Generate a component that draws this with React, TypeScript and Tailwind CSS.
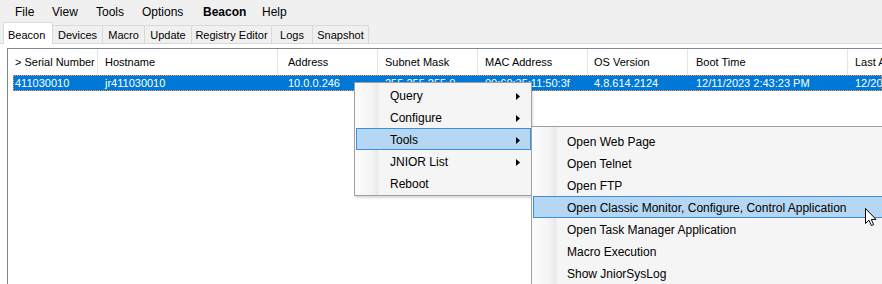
import React from "react";

const menuBar = [
  { label: "File", w: "w-[37px]" },
  { label: "View", w: "w-[44px]" },
  { label: "Tools", w: "w-[46px]" },
  { label: "Options", w: "w-[61px]" },
  { label: "Beacon", w: "w-[59px]", bold: true },
  { label: "Help", w: "w-[40px]" },
];

const tabs = [
  { label: "Devices", w: "w-[50px]" },
  { label: "Macro", w: "w-[42px]" },
  { label: "Update", w: "w-[47px]" },
  { label: "Registry Editor", w: "w-[80px]" },
  { label: "Logs", w: "w-[41px]" },
  { label: "Snapshot", w: "w-[56px]" },
];

const headers = [
  { label: "> Serial Number", cls: "w-[90px] pl-[7px]" },
  { label: "Hostname", cls: "w-[180px] pl-[7px]" },
  { label: "Address", cls: "w-[100px] pl-[10px]" },
  { label: "Subnet Mask", cls: "w-[100px] pl-[7px]" },
  { label: "MAC Address", cls: "w-[110px] pl-[7px]" },
  { label: "OS Version", cls: "w-[100px] pl-[6px]" },
  { label: "Boot Time", cls: "w-[160px] pl-[8px]" },
  { label: "Last Activity", cls: "w-[200px] pl-[7px]" },
];

const row = [
  { text: "411030010", cls: "w-[85px] pl-[2px]" },
  { text: "jr411030010", cls: "w-[180px] pl-[7px]" },
  { text: "10.0.0.246", cls: "w-[100px] pl-[10px]" },
  { text: "255.255.255.0", cls: "w-[100px] pl-[7px]" },
  { text: "00:60:35:11:50:3f", cls: "w-[110px] pl-[7px]" },
  { text: "4.8.614.2124", cls: "w-[100px] pl-[6px]" },
  { text: "12/11/2023 2:43:23 PM", cls: "w-[160px] pl-[8px]" },
  { text: "12/20/2023 9:15:02 AM", cls: "w-[200px] pl-[7px]" },
];

const contextItems = [
  { label: "Query", sub: true },
  { label: "Configure", sub: true },
  { label: "Tools", sub: true, active: true },
  { label: "JNIOR List", sub: true },
  { label: "Reboot" },
];

const toolItems = [
  { label: "Open Web Page" },
  { label: "Open Telnet" },
  { label: "Open FTP" },
  { label: "Open Classic Monitor, Configure, Control Application", active: true },
  { label: "Open Task Manager Application" },
  { label: "Macro Execution" },
  { label: "Show JniorSysLog" },
];

const Arrow = () => (
  <svg width="4" height="7" viewBox="0 0 4 7" className="absolute right-[10px] top-[8px]">
    <path d="M0 0 L4 3.5 L0 7 Z" fill="#000" />
  </svg>
);

const MenuItem: React.FC<{ label: string; sub?: boolean; active?: boolean }> = ({
  label,
  sub,
  active,
}) => (
  <div
    className={`relative h-[22px] flex items-center pl-[33px] pt-[1px] whitespace-nowrap border ${
      active ? "bg-[#b5d7f3] border-[#3a8ee0]" : "border-transparent"
    }`}
  >
    {label}
    {sub && <Arrow />}
  </div>
);

const Cursor = () => (
  <svg
    width="13"
    height="20"
    viewBox="0 0 13 20"
    className="absolute left-[864px] top-[207px]"
  >
    <path
      d="M1.5 1.5 L1.5 16.5 L5 13.2 L7.4 18.6 L9.6 17.6 L7.3 12.4 L12 12.4 Z"
      fill="#fff"
      stroke="#000"
      strokeWidth="1"
      strokeLinejoin="miter"
    />
  </svg>
);

export default function App() {
  return (
    <div className="relative w-[882px] h-[284px] overflow-hidden bg-[#f0f0f0] text-black font-['Liberation_Sans',Arial,sans-serif] select-none">
      {/* menu bar */}
      <div className="flex h-[24px] items-center pl-[15px] text-[12px]">
        {menuBar.map((m) => (
          <div key={m.label} className={`${m.w} ${m.bold ? "font-bold" : ""}`}>
            {m.label}
          </div>
        ))}
      </div>

      {/* tabs */}
      <div className="flex h-[20px] items-end pl-[3px] text-[11px] border-b border-[#d9d9d9]">
        <div className="w-[50px] h-[22px] -mb-px bg-white border border-b-0 border-[#d9d9d9] pl-[4px] pt-[4px] relative z-10">
          Beacon
        </div>
        {tabs.map((t) => (
          <div
            key={t.label}
            className={`${t.w} h-[18px] flex items-center justify-center pt-[2px] border-t border-r border-[#d9d9d9] whitespace-nowrap`}
          >
            {t.label}
          </div>
        ))}
      </div>

      {/* tab page */}
      <div className="bg-white h-[240px] pt-[4px] pl-[7px] text-[11px]">
        <div className="border-l border-t border-[#828790] h-full">
          <div className="flex h-[26px] items-center">
            {headers.map((h) => (
              <div
                key={h.label}
                className={`${h.cls} h-full flex items-center pt-[1px] border-r border-[#e5e5e5] shrink-0 whitespace-nowrap`}
              >
                {h.label}
              </div>
            ))}
          </div>
          <div className="flex ml-[5px] h-[16px] bg-[#0078d7] text-white outline outline-1 outline-dotted outline-[#ff9a3c] -outline-offset-1">
            {row.map((c) => (
              <div key={c.text} className={`${c.cls} shrink-0 flex items-center pt-[1px] whitespace-nowrap`}>
                {c.text}
              </div>
            ))}
          </div>
        </div>
      </div>

      {/* context menu */}
      <div className="absolute left-[354px] top-[82px] w-[178px] h-[114px] border border-[#a0a0a0] bg-[linear-gradient(90deg,#fcfcfc_0px,#f4f4f4_16px,#e9e9e9_23px,#f5f5f5_24px)] pt-[1px] pl-[1px] text-[12px] shadow-[1px_2px_2px_rgba(0,0,0,0.15)]">
        {contextItems.map((i) => (
          <MenuItem key={i.label} {...i} />
        ))}
      </div>

      {/* tools submenu */}
      <div className="absolute left-[531px] top-[126px] w-[400px] h-[180px] border border-[#a0a0a0] bg-[linear-gradient(90deg,#fcfcfc_0px,#f4f4f4_17px,#e9e9e9_24px,#f5f5f5_25px)] pt-[3px] pl-[1px] text-[12px]">
        {toolItems.map((i) => (
          <MenuItem key={i.label} {...i} />
        ))}
      </div>

      <Cursor />
    </div>
  );
}
